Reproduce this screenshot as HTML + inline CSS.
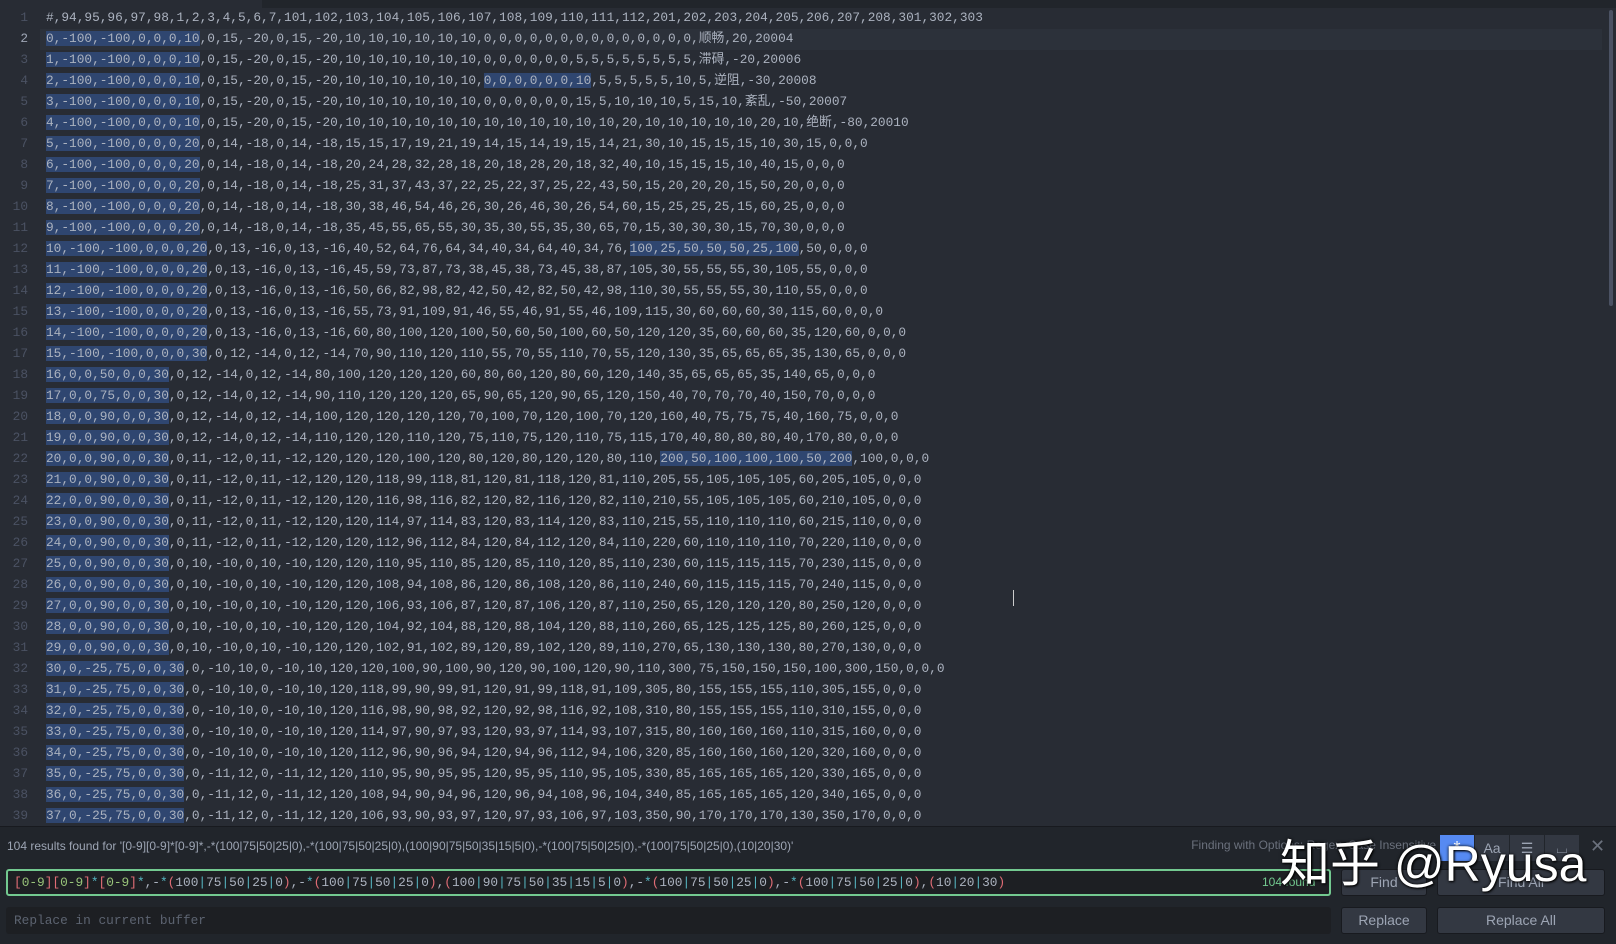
<!DOCTYPE html>
<html><head><meta charset="utf-8"><style>
*{margin:0;padding:0;box-sizing:border-box}
body{width:1616px;height:944px;background:#282c34;position:relative;overflow:hidden;font-family:"Liberation Mono","Noto Sans CJK SC",monospace}
.top{position:absolute;left:262px;top:0;width:1354px;height:8px;background:#21252b}
.cur{position:absolute;left:40px;top:29px;width:1562px;height:21px;background:#2c313a}
.ln{position:absolute;left:0;width:28px;text-align:right;font-size:12.8px;color:#4b5263;line-height:21px}
.tx{position:absolute;left:46px;font-size:12.8px;color:#abb2bf;line-height:21px;white-space:pre}
.h{background:#2f4670}
.sb{position:absolute;left:1609px;top:10px;width:4px;height:296px;background:#4b5263;border-radius:2px}
.panel{position:absolute;left:0;top:826px;width:1616px;height:118px;background:#21252b;border-top:1px solid #181a1f}
.st{position:absolute;left:7px;top:839px;font:12px "Liberation Sans",sans-serif;color:#9da5b4}
.opt{position:absolute;top:838px;font:12px "Liberation Sans",sans-serif;color:#6b717d;right:180px}
.ob{position:absolute;top:835px;width:34px;height:26px;background:#333842;color:#9da5b4;font:14px "Liberation Sans",sans-serif;text-align:center;line-height:26px}
.inp{position:absolute;left:6px;width:1325px;height:27px;background:#1d1f23;border-radius:3px}
.btn{position:absolute;height:27px;background:#333842;border:1px solid #181a1f;border-radius:3px;color:#9da5b4;font:14px "Liberation Sans",sans-serif;text-align:center;line-height:25px}
.r{color:#e06c75}.g{color:#98c379}.c{color:#56b6c2}
.wm{position:absolute;left:1280px;top:834px;font:50px "Liberation Sans","Noto Sans CJK SC",sans-serif;color:#fff;text-shadow:0 0 3px #000,1px 1px 2px #000;white-space:nowrap;line-height:60px}
</style></head><body>
<div class="top"></div>
<div class="cur"></div>
<div class="ln" style="top:7px">1</div><div class="tx" style="top:7px">#,94,95,96,97,98,1,2,3,4,5,6,7,101,102,103,104,105,106,107,108,109,110,111,112,201,202,203,204,205,206,207,208,301,302,303</div>
<div class="ln" style="top:28px;color:#9da5b4">2</div><div class="tx" style="top:28px"><span class="h">0,-100,-100,0,0,0,10</span>,0,15,-20,0,15,-20,10,10,10,10,10,10,0,0,0,0,0,0,0,0,0,0,0,0,0,0,顺畅,20,20004</div>
<div class="ln" style="top:49px">3</div><div class="tx" style="top:49px"><span class="h">1,-100,-100,0,0,0,10</span>,0,15,-20,0,15,-20,10,10,10,10,10,10,0,0,0,0,0,0,5,5,5,5,5,5,5,5,滞碍,-20,20006</div>
<div class="ln" style="top:70px">4</div><div class="tx" style="top:70px"><span class="h">2,-100,-100,0,0,0,10</span>,0,15,-20,0,15,-20,10,10,10,10,10,10,<span class="h">0,0,0,0,0,0,10</span>,5,5,5,5,5,10,5,逆阻,-30,20008</div>
<div class="ln" style="top:91px">5</div><div class="tx" style="top:91px"><span class="h">3,-100,-100,0,0,0,10</span>,0,15,-20,0,15,-20,10,10,10,10,10,10,0,0,0,0,0,0,15,5,10,10,10,5,15,10,紊乱,-50,20007</div>
<div class="ln" style="top:112px">6</div><div class="tx" style="top:112px"><span class="h">4,-100,-100,0,0,0,10</span>,0,15,-20,0,15,-20,10,10,10,10,10,10,10,10,10,10,10,10,20,10,10,10,10,10,20,10,绝断,-80,20010</div>
<div class="ln" style="top:133px">7</div><div class="tx" style="top:133px"><span class="h">5,-100,-100,0,0,0,20</span>,0,14,-18,0,14,-18,15,15,17,19,21,19,14,15,14,19,15,14,21,30,10,15,15,15,10,30,15,0,0,0</div>
<div class="ln" style="top:154px">8</div><div class="tx" style="top:154px"><span class="h">6,-100,-100,0,0,0,20</span>,0,14,-18,0,14,-18,20,24,28,32,28,18,20,18,28,20,18,32,40,10,15,15,15,10,40,15,0,0,0</div>
<div class="ln" style="top:175px">9</div><div class="tx" style="top:175px"><span class="h">7,-100,-100,0,0,0,20</span>,0,14,-18,0,14,-18,25,31,37,43,37,22,25,22,37,25,22,43,50,15,20,20,20,15,50,20,0,0,0</div>
<div class="ln" style="top:196px">10</div><div class="tx" style="top:196px"><span class="h">8,-100,-100,0,0,0,20</span>,0,14,-18,0,14,-18,30,38,46,54,46,26,30,26,46,30,26,54,60,15,25,25,25,15,60,25,0,0,0</div>
<div class="ln" style="top:217px">11</div><div class="tx" style="top:217px"><span class="h">9,-100,-100,0,0,0,20</span>,0,14,-18,0,14,-18,35,45,55,65,55,30,35,30,55,35,30,65,70,15,30,30,30,15,70,30,0,0,0</div>
<div class="ln" style="top:238px">12</div><div class="tx" style="top:238px"><span class="h">10,-100,-100,0,0,0,20</span>,0,13,-16,0,13,-16,40,52,64,76,64,34,40,34,64,40,34,76,<span class="h">100,25,50,50,50,25,100</span>,50,0,0,0</div>
<div class="ln" style="top:259px">13</div><div class="tx" style="top:259px"><span class="h">11,-100,-100,0,0,0,20</span>,0,13,-16,0,13,-16,45,59,73,87,73,38,45,38,73,45,38,87,105,30,55,55,55,30,105,55,0,0,0</div>
<div class="ln" style="top:280px">14</div><div class="tx" style="top:280px"><span class="h">12,-100,-100,0,0,0,20</span>,0,13,-16,0,13,-16,50,66,82,98,82,42,50,42,82,50,42,98,110,30,55,55,55,30,110,55,0,0,0</div>
<div class="ln" style="top:301px">15</div><div class="tx" style="top:301px"><span class="h">13,-100,-100,0,0,0,20</span>,0,13,-16,0,13,-16,55,73,91,109,91,46,55,46,91,55,46,109,115,30,60,60,60,30,115,60,0,0,0</div>
<div class="ln" style="top:322px">16</div><div class="tx" style="top:322px"><span class="h">14,-100,-100,0,0,0,20</span>,0,13,-16,0,13,-16,60,80,100,120,100,50,60,50,100,60,50,120,120,35,60,60,60,35,120,60,0,0,0</div>
<div class="ln" style="top:343px">17</div><div class="tx" style="top:343px"><span class="h">15,-100,-100,0,0,0,30</span>,0,12,-14,0,12,-14,70,90,110,120,110,55,70,55,110,70,55,120,130,35,65,65,65,35,130,65,0,0,0</div>
<div class="ln" style="top:364px">18</div><div class="tx" style="top:364px"><span class="h">16,0,0,50,0,0,30</span>,0,12,-14,0,12,-14,80,100,120,120,120,60,80,60,120,80,60,120,140,35,65,65,65,35,140,65,0,0,0</div>
<div class="ln" style="top:385px">19</div><div class="tx" style="top:385px"><span class="h">17,0,0,75,0,0,30</span>,0,12,-14,0,12,-14,90,110,120,120,120,65,90,65,120,90,65,120,150,40,70,70,70,40,150,70,0,0,0</div>
<div class="ln" style="top:406px">20</div><div class="tx" style="top:406px"><span class="h">18,0,0,90,0,0,30</span>,0,12,-14,0,12,-14,100,120,120,120,120,70,100,70,120,100,70,120,160,40,75,75,75,40,160,75,0,0,0</div>
<div class="ln" style="top:427px">21</div><div class="tx" style="top:427px"><span class="h">19,0,0,90,0,0,30</span>,0,12,-14,0,12,-14,110,120,120,110,120,75,110,75,120,110,75,115,170,40,80,80,80,40,170,80,0,0,0</div>
<div class="ln" style="top:448px">22</div><div class="tx" style="top:448px"><span class="h">20,0,0,90,0,0,30</span>,0,11,-12,0,11,-12,120,120,120,100,120,80,120,80,120,120,80,110,<span class="h">200,50,100,100,100,50,200</span>,100,0,0,0</div>
<div class="ln" style="top:469px">23</div><div class="tx" style="top:469px"><span class="h">21,0,0,90,0,0,30</span>,0,11,-12,0,11,-12,120,120,118,99,118,81,120,81,118,120,81,110,205,55,105,105,105,60,205,105,0,0,0</div>
<div class="ln" style="top:490px">24</div><div class="tx" style="top:490px"><span class="h">22,0,0,90,0,0,30</span>,0,11,-12,0,11,-12,120,120,116,98,116,82,120,82,116,120,82,110,210,55,105,105,105,60,210,105,0,0,0</div>
<div class="ln" style="top:511px">25</div><div class="tx" style="top:511px"><span class="h">23,0,0,90,0,0,30</span>,0,11,-12,0,11,-12,120,120,114,97,114,83,120,83,114,120,83,110,215,55,110,110,110,60,215,110,0,0,0</div>
<div class="ln" style="top:532px">26</div><div class="tx" style="top:532px"><span class="h">24,0,0,90,0,0,30</span>,0,11,-12,0,11,-12,120,120,112,96,112,84,120,84,112,120,84,110,220,60,110,110,110,70,220,110,0,0,0</div>
<div class="ln" style="top:553px">27</div><div class="tx" style="top:553px"><span class="h">25,0,0,90,0,0,30</span>,0,10,-10,0,10,-10,120,120,110,95,110,85,120,85,110,120,85,110,230,60,115,115,115,70,230,115,0,0,0</div>
<div class="ln" style="top:574px">28</div><div class="tx" style="top:574px"><span class="h">26,0,0,90,0,0,30</span>,0,10,-10,0,10,-10,120,120,108,94,108,86,120,86,108,120,86,110,240,60,115,115,115,70,240,115,0,0,0</div>
<div class="ln" style="top:595px">29</div><div class="tx" style="top:595px"><span class="h">27,0,0,90,0,0,30</span>,0,10,-10,0,10,-10,120,120,106,93,106,87,120,87,106,120,87,110,250,65,120,120,120,80,250,120,0,0,0</div>
<div class="ln" style="top:616px">30</div><div class="tx" style="top:616px"><span class="h">28,0,0,90,0,0,30</span>,0,10,-10,0,10,-10,120,120,104,92,104,88,120,88,104,120,88,110,260,65,125,125,125,80,260,125,0,0,0</div>
<div class="ln" style="top:637px">31</div><div class="tx" style="top:637px"><span class="h">29,0,0,90,0,0,30</span>,0,10,-10,0,10,-10,120,120,102,91,102,89,120,89,102,120,89,110,270,65,130,130,130,80,270,130,0,0,0</div>
<div class="ln" style="top:658px">32</div><div class="tx" style="top:658px"><span class="h">30,0,-25,75,0,0,30</span>,0,-10,10,0,-10,10,120,120,100,90,100,90,120,90,100,120,90,110,300,75,150,150,150,100,300,150,0,0,0</div>
<div class="ln" style="top:679px">33</div><div class="tx" style="top:679px"><span class="h">31,0,-25,75,0,0,30</span>,0,-10,10,0,-10,10,120,118,99,90,99,91,120,91,99,118,91,109,305,80,155,155,155,110,305,155,0,0,0</div>
<div class="ln" style="top:700px">34</div><div class="tx" style="top:700px"><span class="h">32,0,-25,75,0,0,30</span>,0,-10,10,0,-10,10,120,116,98,90,98,92,120,92,98,116,92,108,310,80,155,155,155,110,310,155,0,0,0</div>
<div class="ln" style="top:721px">35</div><div class="tx" style="top:721px"><span class="h">33,0,-25,75,0,0,30</span>,0,-10,10,0,-10,10,120,114,97,90,97,93,120,93,97,114,93,107,315,80,160,160,160,110,315,160,0,0,0</div>
<div class="ln" style="top:742px">36</div><div class="tx" style="top:742px"><span class="h">34,0,-25,75,0,0,30</span>,0,-10,10,0,-10,10,120,112,96,90,96,94,120,94,96,112,94,106,320,85,160,160,160,120,320,160,0,0,0</div>
<div class="ln" style="top:763px">37</div><div class="tx" style="top:763px"><span class="h">35,0,-25,75,0,0,30</span>,0,-11,12,0,-11,12,120,110,95,90,95,95,120,95,95,110,95,105,330,85,165,165,165,120,330,165,0,0,0</div>
<div class="ln" style="top:784px">38</div><div class="tx" style="top:784px"><span class="h">36,0,-25,75,0,0,30</span>,0,-11,12,0,-11,12,120,108,94,90,94,96,120,96,94,108,96,104,340,85,165,165,165,120,340,165,0,0,0</div>
<div class="ln" style="top:805px">39</div><div class="tx" style="top:805px"><span class="h">37,0,-25,75,0,0,30</span>,0,-11,12,0,-11,12,120,106,93,90,93,97,120,97,93,106,97,103,350,90,170,170,170,130,350,170,0,0,0</div>
<div class="sb"></div>
<div style="position:absolute;left:1013px;top:590px;width:1px;height:16px;background:#ccc"></div>
<div class="panel"></div>
<div class="st">104 results found for '[0-9][0-9]*[0-9]*,-*(100|75|50|25|0),-*(100|75|50|25|0),(100|90|75|50|35|15|5|0),-*(100|75|50|25|0),-*(100|75|50|25|0),(10|20|30)'</div>
<div class="opt" style="right:180px">Finding with Options: Regex, Case Insensitive</div>
<div class="ob" style="left:1440px;background:#568af2;color:#fff;font-size:18px">*</div>
<div class="ob" style="left:1475px">Aa</div>
<div class="ob" style="left:1510px">☰</div>
<div class="ob" style="left:1545px">⌴</div>
<div style="position:absolute;left:1590px;top:836px;color:#6b717d;font:18px 'Liberation Sans',sans-serif">✕</div>
<div class="inp" style="top:869px;border:2px solid #73c990"></div>
<div class="tx" style="top:872px;left:14px;color:#abb2bf"><span class="r">[</span><span class="g">0-9</span><span class="r">][</span><span class="g">0-9</span><span class="r">]</span><span class="c">*</span><span class="r">[</span><span class="g">0-9</span><span class="r">]</span><span class="c">*</span>,-<span class="c">*</span><span class="r">(</span>100<span class="c">|</span>75<span class="c">|</span>50<span class="c">|</span>25<span class="c">|</span>0<span class="r">)</span>,-<span class="c">*</span><span class="r">(</span>100<span class="c">|</span>75<span class="c">|</span>50<span class="c">|</span>25<span class="c">|</span>0<span class="r">)</span>,<span class="r">(</span>100<span class="c">|</span>90<span class="c">|</span>75<span class="c">|</span>50<span class="c">|</span>35<span class="c">|</span>15<span class="c">|</span>5<span class="c">|</span>0<span class="r">)</span>,-<span class="c">*</span><span class="r">(</span>100<span class="c">|</span>75<span class="c">|</span>50<span class="c">|</span>25<span class="c">|</span>0<span class="r">)</span>,-<span class="c">*</span><span class="r">(</span>100<span class="c">|</span>75<span class="c">|</span>50<span class="c">|</span>25<span class="c">|</span>0<span class="r">)</span>,<span class="r">(</span>10<span class="c">|</span>20<span class="c">|</span>30<span class="r">)</span></div>
<div style="position:absolute;left:1262px;top:875px;font:12px 'Liberation Sans',sans-serif;color:#73c990">104 found</div>
<div class="inp" style="top:907px"></div>
<div class="tx" style="top:910px;left:14px;color:#5c6370">Replace in current buffer</div>
<div class="btn" style="left:1341px;top:869px;width:86px">Find</div>
<div class="btn" style="left:1437px;top:869px;width:168px">Find All</div>
<div class="btn" style="left:1341px;top:907px;width:86px">Replace</div>
<div class="btn" style="left:1437px;top:907px;width:168px">Replace All</div>
<div class="wm">知乎 @Ryusa</div>
</body></html>
